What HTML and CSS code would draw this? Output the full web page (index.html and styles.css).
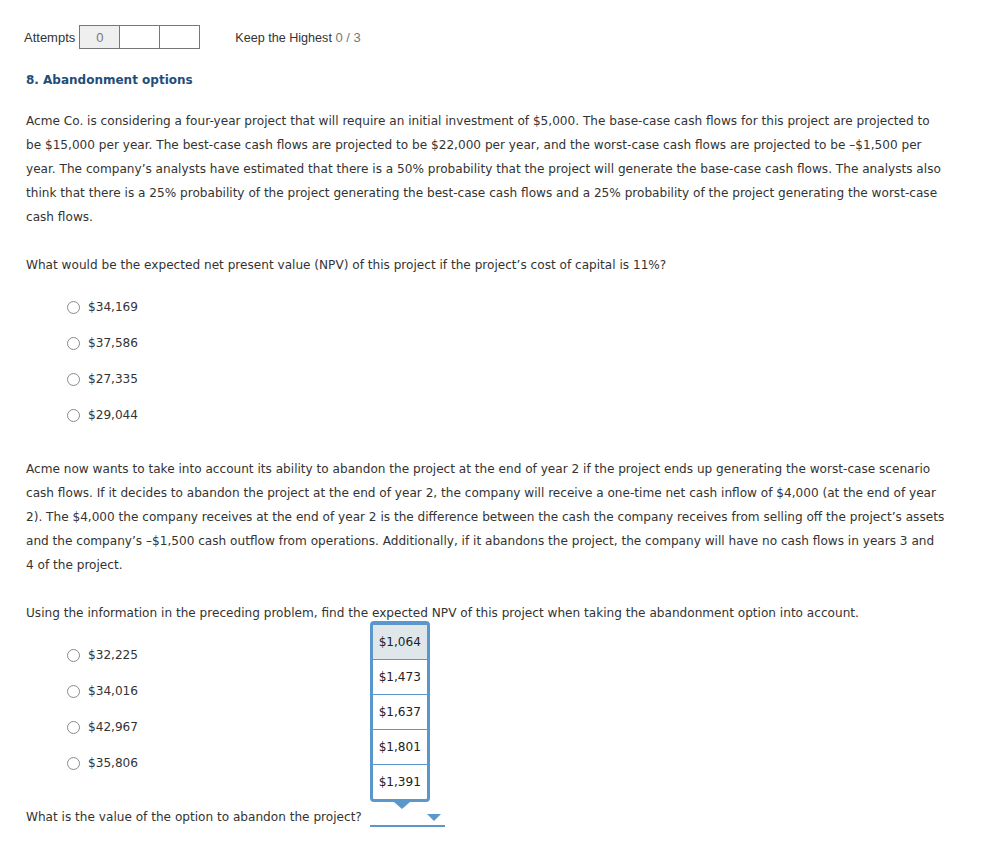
FILE: index.html
```html
<!DOCTYPE html>
<html>
<head>
<meta charset="utf-8">
<link rel="stylesheet" href="styles.css">
</head>
<body>
<div class="page">
  <div class="attempts-bar">
    <span class="attempts-label">Attempts</span>
    <div class="attempt-boxes">
      <div class="abox filled">0</div>
      <div class="abox"></div>
      <div class="abox"></div>
    </div>
    <span class="keep">Keep the Highest <span class="score">0 / 3</span></span>
  </div>

  <h2 class="title">8. Abandonment options</h2>

  <p class="para">Acme Co. is considering a four-year project that will require an initial investment of $5,000. The base-case cash flows for this project are projected to be $15,000 per year. The best-case cash flows are projected to be $22,000 per year, and the worst-case cash flows are projected to be –$1,500 per year. The company’s analysts have estimated that there is a 50% probability that the project will generate the base-case cash flows. The analysts also think that there is a 25% probability of the project generating the best-case cash flows and a 25% probability of the project generating the worst-case cash flows.</p>

  <p class="para">What would be the expected net present value (NPV) of this project if the project’s cost of capital is 11%?</p>

  <ul class="options">
    <li><span class="radio"></span>$34,169</li>
    <li><span class="radio"></span>$37,586</li>
    <li><span class="radio"></span>$27,335</li>
    <li><span class="radio"></span>$29,044</li>
  </ul>

  <p class="para para-wide">Acme now wants to take into account its ability to abandon the project at the end of year 2 if the project ends up generating the worst-case scenario cash flows. If it decides to abandon the project at the end of year 2, the company will receive a one-time net cash inflow of $4,000 (at the end of year 2). The $4,000 the company receives at the end of year 2 is the difference between the cash the company receives from selling off the project’s assets and the company’s –$1,500 cash outflow from operations. Additionally, if it abandons the project, the company will have no cash flows in years 3 and 4 of the project.</p>

  <p class="para">Using the information in the preceding problem, find the expected NPV of this project when taking the abandonment option into account.</p>

  <ul class="options">
    <li><span class="radio"></span>$32,225</li>
    <li><span class="radio"></span>$34,016</li>
    <li><span class="radio"></span>$42,967</li>
    <li><span class="radio"></span>$35,806</li>
  </ul>

  <div class="last-q">
    <span class="last-text">What is the value of the option to abandon the project?</span>
    <div class="select">
      <span class="select-arrow"></span>
      <div class="dropdown">
        <div class="dd-item active">$1,064</div>
        <div class="dd-item">$1,473</div>
        <div class="dd-item">$1,637</div>
        <div class="dd-item">$1,801</div>
        <div class="dd-item">$1,391</div>
        <span class="dd-pointer"></span>
      </div>
    </div>
  </div>
</div>
</body>
</html>
```

FILE: styles.css
```css
html, body {
  margin: 0;
  padding: 0;
  background: #ffffff;
}

.page {
  padding: 25px 0 0 26px;
  font-family: "DejaVu Sans", Verdana, sans-serif;
  font-size: 12.1px;
  color: #333333;
  width: 918px;
}

.attempts-bar {
  display: flex;
  align-items: center;
  height: 24px;
  margin-left: -2px;
  font-family: "Liberation Sans", Arial, sans-serif;
  font-size: 12.6px;
}

.attempts-label {
  color: #333;
  font-size: 13px;
  margin-right: 4px;
}

.attempt-boxes {
  display: flex;
}

.abox {
  width: 39px;
  height: 22px;
  border: 1px solid #777;
  margin-left: -1px;
  display: flex;
  align-items: center;
  justify-content: center;
  color: #777;
  font-size: 13px;
}
.abox:first-child { margin-left: 0; }
.abox.filled { background: #efefef; }

.keep {
  margin-left: 35px;
  color: #333;
}
.score {
  color: #777;
  font-size: 13px;
}

.title {
  margin: 23px 0 0 0;
  font-size: 12px;
  line-height: 16px;
  font-weight: bold;
  color: #1f4e79;
}

.para {
  margin: 21px 0 0 0;
  line-height: 24px;
}
.para + .para { margin-top: 24px; }
.options + .para { margin-top: 24px; }
.para-wide { width: 919px; }

.options {
  list-style: none;
  margin: 12px 0 0 0;
  padding: 0 0 0 41px;
}

.options li {
  height: 36px;
  display: flex;
  align-items: center;
}

.radio {
  width: 11px;
  height: 11px;
  border: 1px solid #8a8a8a;
  border-radius: 50%;
  margin-right: 8px;
  box-sizing: content-box;
  flex: none;
}

.last-q {
  margin-top: 24px;
  display: flex;
  align-items: flex-start;
  line-height: 24px;
}

.select {
  position: relative;
  width: 75px;
  height: 20px;
  margin-left: 8px;
  border-bottom: 2px solid #5b97cb;
}

.select-arrow {
  position: absolute;
  right: 4px;
  top: 9px;
  width: 0;
  height: 0;
  border-left: 7px solid transparent;
  border-right: 7px solid transparent;
  border-top: 7px solid #5b97cb;
}

.dropdown {
  position: absolute;
  left: 0;
  bottom: 23px;
  width: 54px;
  border: 3px solid #5b97cb;
  border-top-width: 4px;
  border-radius: 4px;
  background: #fff;
  line-height: 16px;
}

.dd-item {
  height: 34px;
  display: flex;
  align-items: center;
  justify-content: center;
  border-top: 1px solid #5b97cb;
  color: #222;
}
.dd-item:first-child { border-top: none; }
.dd-item.active { background: #e0e7ea; }

.dd-pointer {
  position: absolute;
  left: 21px;
  bottom: -10px;
  width: 0;
  height: 0;
  border-left: 8px solid transparent;
  border-right: 8px solid transparent;
  border-top: 7px solid #5b97cb;
}
```
